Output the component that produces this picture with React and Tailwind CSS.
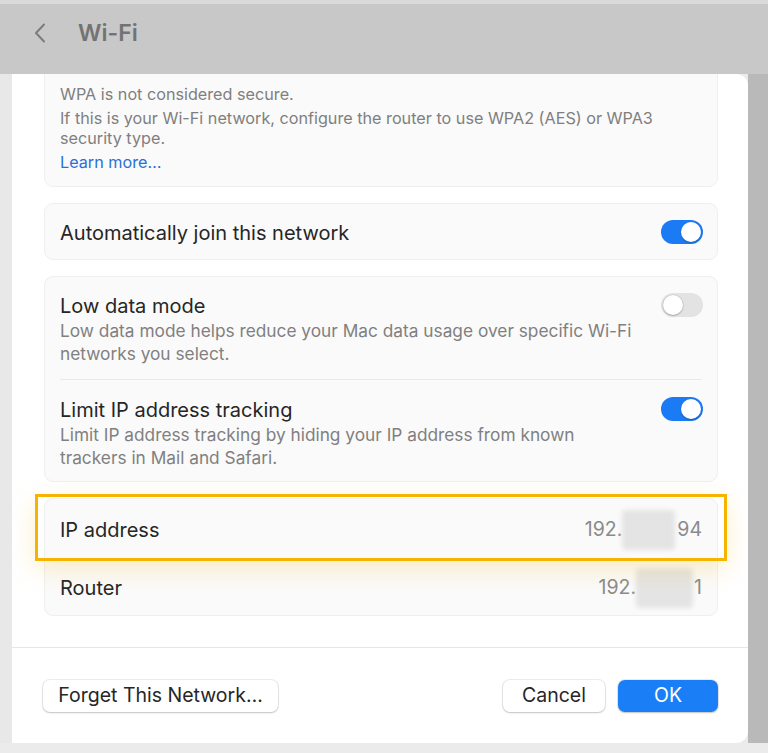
import React from 'react'

const card = 'bg-[#fafafa] border border-[#efefef] rounded-[9px]'
const title = 'text-[20px] leading-[24px] text-[#262626]'
const desc = 'text-[17.3px] text-[#808080] whitespace-nowrap'
const warn = 'text-[16.2px] leading-[20px] whitespace-nowrap'

function Toggle({ on }) {
  if (on) {
    return (
      <div className="w-[42px] h-[24px] rounded-full bg-[#1b7bf4] flex items-center justify-end px-[2px] shrink-0">
        <div className="w-[20px] h-[20px] rounded-full bg-white shadow-[0_1px_2px_rgba(0,0,0,0.25)]" />
      </div>
    )
  }
  return (
    <div className="w-[42px] h-[24px] rounded-full bg-[#e3e3e3] flex items-center px-[2px] shrink-0">
      <div className="w-[20px] h-[20px] rounded-full bg-white shadow-[0_0_0_0.5px_rgba(0,0,0,0.12),0_1px_2px_rgba(0,0,0,0.2)]" />
    </div>
  )
}

function Hidden({ w }) {
  return <div className={`${w} h-[40px] rounded-[4px] bg-[#e4e4e4] blur-[2px]`} />
}

function Button({ children, className = '' }) {
  return (
    <button className={`h-[32px] rounded-[7px] flex items-center justify-center text-[19.5px] shadow-[0_0_0_1px_rgba(0,0,0,0.07),0_1px_2px_rgba(0,0,0,0.18)] ${className}`}>
      {children}
    </button>
  )
}

export default function App() {
  return (
    <div className="w-full h-[753px] flex flex-col overflow-hidden bg-[#ebebeb] font-['Inter','Liberation_Sans',sans-serif]">
      {/* top bar */}
      <div className="h-[74px] shrink-0 bg-[#c8c8c8] flex flex-col">
        <div className="h-[4px] bg-[#dadada]" />
        <div className="h-[58px] flex items-center pl-[34px]">
          <svg viewBox="0 0 12 20" className="w-[12px] h-[20px]" fill="none">
            <path d="M10 1.5 L2 10 L10 18.5" stroke="#7c7c7c" strokeWidth={2} strokeLinecap="round" strokeLinejoin="round" />
          </svg>
          <span className="ml-[32px] text-[23px] font-semibold text-[#737373]">Wi-Fi</span>
        </div>
      </div>

      <div className="h-[669px] shrink-0 flex">
        <div className="w-[12px] bg-[#e8e8e8]" />

        {/* sheet */}
        <div className="w-[736px] bg-white rounded-r-[12px] flex flex-col overflow-hidden">
          <div className="h-[573px] shrink-0 overflow-hidden pl-[32px] pr-[30px]">
            <div className="flex flex-col gap-[16px]">
              {/* security warning, scrolled partly out of view */}
              <div className={`${card} -mt-[32px] px-[15px] pt-[11px] pb-[14px]`}>
                <div className="h-[24px] flex items-center gap-[10px]">
                  <svg viewBox="0 0 16 14" className="w-[14px] h-[13px]">
                    <path d="M8 0.5 L15.5 13.5 L0.5 13.5 Z" fill="#f4c21b" />
                  </svg>
                </div>
                <p className={`${warn} text-[#7f7f7f] mt-[6px]`}>WPA is not considered secure.</p>
                <p className={`${warn} text-[#7f7f7f] mt-[4px]`}>
                  If this is your Wi-Fi network, configure the router to use WPA2 (AES) or WPA3
                  <br />
                  security type.
                </p>
                <p className={`${warn} text-[#2a6fd8] mt-[4px]`}>Learn more…</p>
              </div>

              {/* auto join */}
              <div className={`${card} h-[57px] flex items-center justify-between pl-[15px] pr-[14px]`}>
                <span className={`${title} mt-[2px]`}>Automatically join this network</span>
                <Toggle on />
              </div>

              {/* data options */}
              <div className={`${card} px-[15px]`}>
                <div className="pt-[17px] pb-[14px] flex justify-between">
                  <div>
                    <div className={title}>Low data mode</div>
                    <p className={`${desc} leading-[23px] mt-[1px]`}>
                      Low data mode helps reduce your Mac data usage over specific Wi-Fi
                      <br />
                      networks you select.
                    </p>
                  </div>
                  <div className="-mt-[1px] mr-[-1px]">
                    <Toggle />
                  </div>
                </div>
                <div className="h-px bg-[#e9e9e9]" />
                <div className="pt-[18px] pb-[12px] flex justify-between">
                  <div>
                    <div className={title}>Limit IP address tracking</div>
                    <p className={`${desc} leading-[23px] mt-[1px]`}>
                      Limit IP address tracking by hiding your IP address from known
                      <br />
                      trackers in Mail and Safari.
                    </p>
                  </div>
                  <div className="-mt-[1px] mr-[-1px]">
                    <Toggle on />
                  </div>
                </div>
              </div>

              {/* addresses */}
              <div className={`${card} relative px-[15px]`}>
                <div className="h-[61px] flex items-center justify-between">
                  <span className={title}>IP address</span>
                  <div className="flex items-center text-[19.5px] text-[#8a8a8a]">
                    <span>192.</span>
                    <Hidden w="w-[53px]" />
                    <span className="ml-[2px]">94</span>
                  </div>
                </div>
                <div className="h-[55px] flex items-center justify-between">
                  <span className={title}>Router</span>
                  <div className="flex items-center text-[19.5px] text-[#8a8a8a]">
                    <span>192.</span>
                    <Hidden w="w-[57px]" />
                    <span className="ml-[1px]">1</span>
                  </div>
                </div>
                <div className="absolute -left-[10px] -right-[10px] -top-[5px] h-[67px] border-[3px] border-[#f6b400] shadow-[0_8px_24px_rgba(246,180,0,0.22)] pointer-events-none" />
              </div>
            </div>
          </div>

          {/* footer */}
          <div className="flex-1 border-t border-[#e6e6e6] flex items-center justify-between pl-[31px] pr-[30px]">
            <Button className="w-[235px] bg-white text-[#262626]">Forget This Network…</Button>
            <div className="flex gap-[13px]">
              <Button className="w-[102px] bg-white text-[#262626]">Cancel</Button>
              <Button className="w-[100px] bg-[#1a7ff7] text-white">OK</Button>
            </div>
          </div>
        </div>

        <div className="flex-1 bg-[#b9b9b9]" />
      </div>

      <div className="flex-1 bg-[#ebebeb]" />
    </div>
  )
}
